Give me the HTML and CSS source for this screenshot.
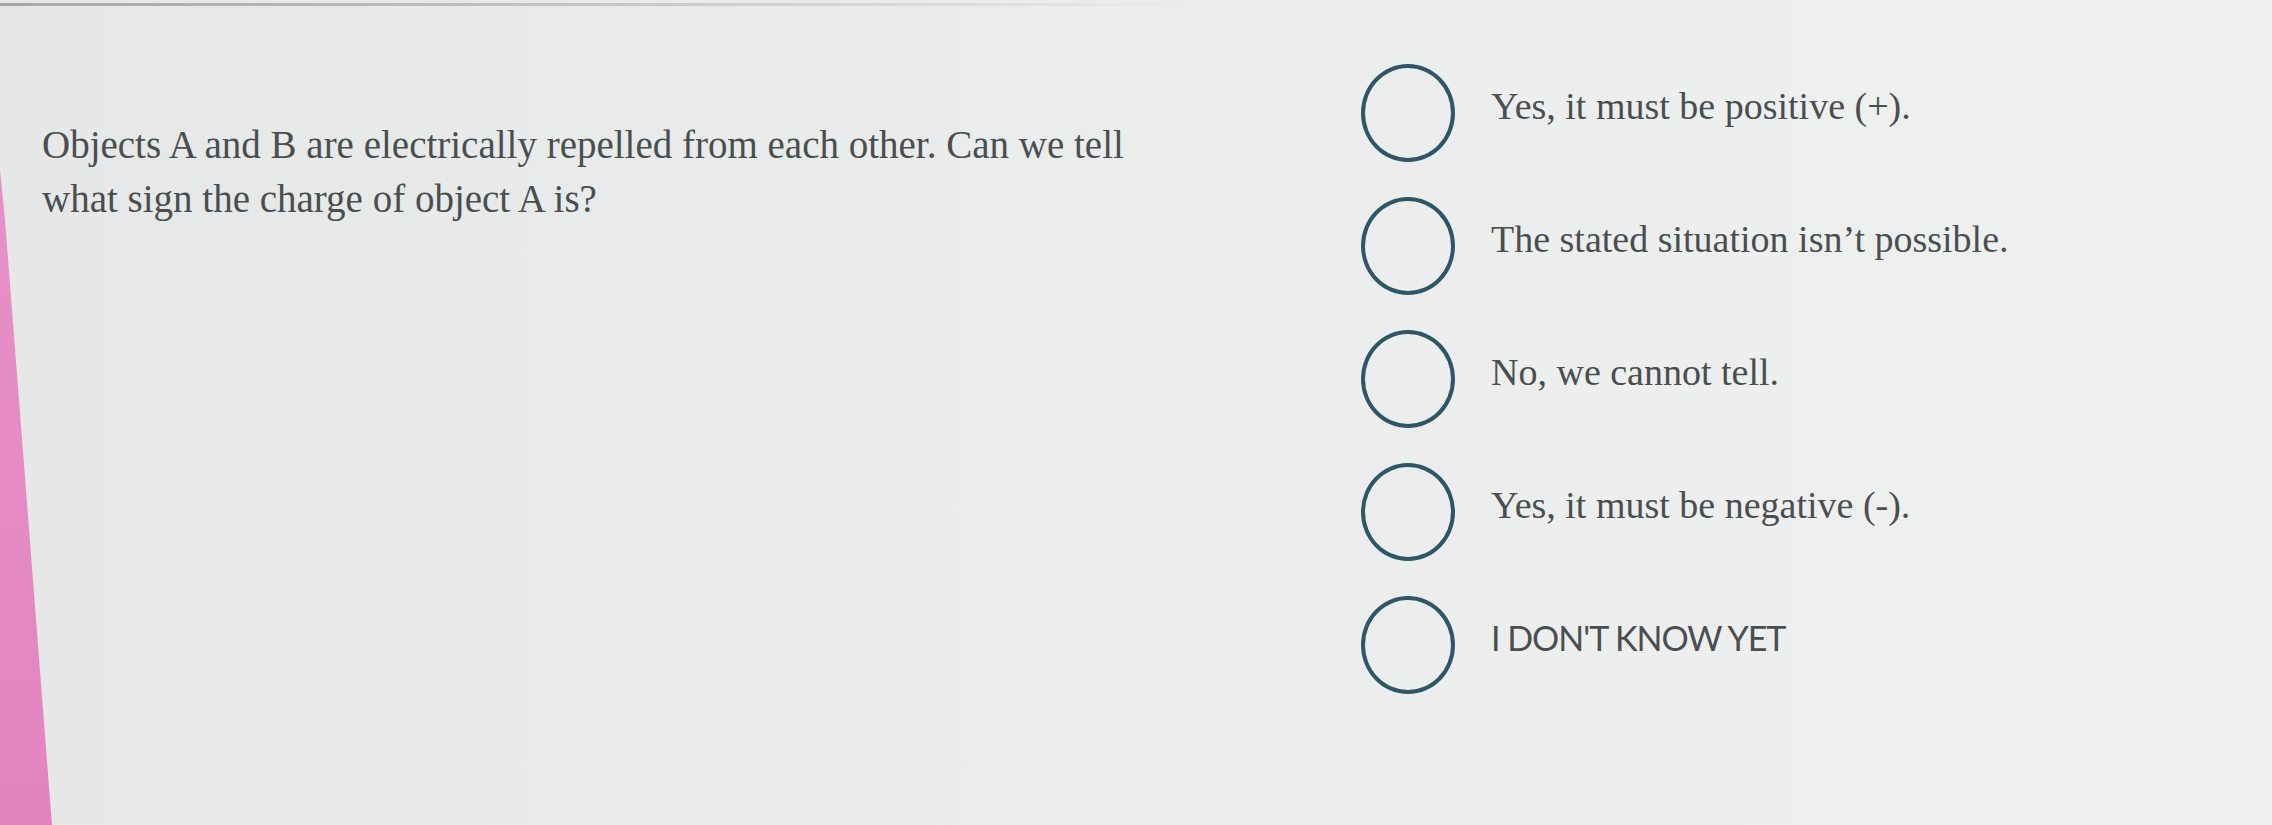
FILE: index.html
```html
<!DOCTYPE html>
<html lang="en">
<head>
    <meta charset="UTF-8">
    <meta name="viewport" content="width=device-width, initial-scale=1.0">
    <title>Question</title>
    <link rel="stylesheet" href="styles.css">
</head>
<body>
    <div class="pagina">
        <!-- Pregunta -->
        <div class="pregunta">
            <p>Objects A and B are electrically repelled from each other. Can we tell what sign the charge of object A is?</p>
        </div>

        <!-- Opciones -->
        <ul class="opciones">
            <li class="opcion">
                <span class="radio"></span>
                <span class="texto">Yes, it must be positive (+).</span>
            </li>
            <li class="opcion">
                <span class="radio"></span>
                <span class="texto">The stated situation isn’t possible.</span>
            </li>
            <li class="opcion">
                <span class="radio"></span>
                <span class="texto">No, we cannot tell.</span>
            </li>
            <li class="opcion">
                <span class="radio"></span>
                <span class="texto">Yes, it must be negative (-).</span>
            </li>
            <li class="opcion">
                <span class="radio"></span>
                <span class="texto mayus">I DON'T KNOW YET</span>
            </li>
        </ul>
    </div>
</body>
</html>
```

FILE: styles.css
```css
body {
    margin: 0;
    height: 825px;
    overflow: hidden;
    position: relative;
    background: linear-gradient(to right, #e5e8e6 0%, #e9ecea 40%, #edefee 75%, #eff1f0 100%);
    font-family: "Liberation Serif", "Times New Roman", serif;
    color: #4a4e50;
}

/* Borde de la pantalla arriba */
body::after {
    content: "";
    position: absolute;
    top: 3px;
    left: 0;
    width: 1200px;
    height: 3px;
    background: linear-gradient(to right, #a4a8a8 0%, #b5b9b9 30%, rgba(200, 204, 204, 0) 100%);
}

/* Franja rosa a la izquierda */
body::before {
    content: "";
    position: absolute;
    top: 0;
    left: 0;
    width: 60px;
    height: 825px;
    background: linear-gradient(to bottom, #e993c9, #e384c0);
    clip-path: polygon(0 170px, 5px 220px, 52px 825px, 0 825px);
}

.pagina {
    display: flex;
    align-items: flex-start;
    padding: 0 0 0 42px;
}

/* Pregunta */
.pregunta {
    width: 1125px;
    padding-top: 118px;
}

.pregunta p {
    margin: 0;
    font-size: 39px;
    line-height: 54px;
}

/* Opciones */
.opciones {
    list-style: none;
    margin: 0;
    padding: 46px 0 0 0;
    margin-left: 194px;
}

.opcion {
    display: flex;
    align-items: center;
    height: 133px;
}

.radio {
    width: 86px;
    height: 90px;
    border: 4.5px solid #2e5667;
    border-radius: 50%;
    flex-shrink: 0;
}

.texto {
    margin-left: 36px;
    padding-bottom: 14px;
    font-size: 38px;
}

.texto.mayus {
    font-family: Lato, "Liberation Sans", sans-serif;
    font-size: 34px;
    letter-spacing: -1px;
}
```
